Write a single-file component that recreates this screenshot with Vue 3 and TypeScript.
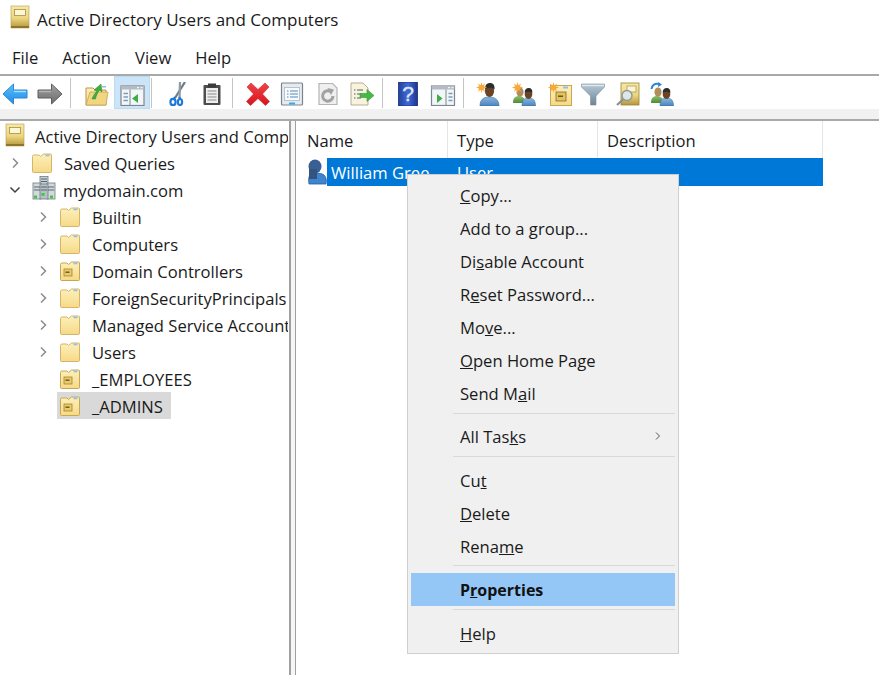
<script setup lang="ts">
import { computed } from 'vue'

type Tool = { kind: 'icon' | 'sep'; c: number; icon?: string; active?: boolean }
const raw: Tool[] = [
  { kind: 'icon', c: 15, icon: 'back' },
  { kind: 'icon', c: 50, icon: 'forward' },
  { kind: 'sep', c: 70 },
  { kind: 'icon', c: 96, icon: 'up' },
  { kind: 'icon', c: 132, icon: 'tree', active: true },
  { kind: 'sep', c: 151 },
  { kind: 'icon', c: 178, icon: 'cut' },
  { kind: 'icon', c: 212, icon: 'paste' },
  { kind: 'sep', c: 232 },
  { kind: 'icon', c: 258, icon: 'del' },
  { kind: 'icon', c: 292, icon: 'props' },
  { kind: 'icon', c: 328, icon: 'refresh' },
  { kind: 'icon', c: 362, icon: 'export' },
  { kind: 'sep', c: 382 },
  { kind: 'icon', c: 408, icon: 'help' },
  { kind: 'icon', c: 443, icon: 'mmc' },
  { kind: 'sep', c: 463 },
  { kind: 'icon', c: 488, icon: 'newuser' },
  { kind: 'icon', c: 524, icon: 'newgroup' },
  { kind: 'icon', c: 560, icon: 'newou' },
  { kind: 'icon', c: 593, icon: 'filter' },
  { kind: 'icon', c: 628, icon: 'find' },
  { kind: 'icon', c: 662, icon: 'addgroup' }
]
const tools = computed(() => {
  let right = 0
  return raw.map((t) => {
    const w = t.kind === 'sep' ? 1 : 36
    const left = t.kind === 'sep' ? t.c : t.c - 18
    const ml = left - right
    right = left + w
    return { ...t, ml }
  })
})

type Node = { label: string; level: number; icon: string; chev?: 'r' | 'd'; sel?: boolean }
const nodes: Node[] = [
  { label: 'Active Directory Users and Computers', level: 0, icon: 'book' },
  { label: 'Saved Queries', level: 1, icon: 'folder', chev: 'r' },
  { label: 'mydomain.com', level: 1, icon: 'domain', chev: 'd' },
  { label: 'Builtin', level: 2, icon: 'folder', chev: 'r' },
  { label: 'Computers', level: 2, icon: 'folder', chev: 'r' },
  { label: 'Domain Controllers', level: 2, icon: 'ou', chev: 'r' },
  { label: 'ForeignSecurityPrincipals', level: 2, icon: 'folder', chev: 'r' },
  { label: 'Managed Service Accounts', level: 2, icon: 'folder', chev: 'r' },
  { label: 'Users', level: 2, icon: 'folder', chev: 'r' },
  { label: '_EMPLOYEES', level: 2, icon: 'ou' },
  { label: '_ADMINS', level: 2, icon: 'ou', sel: true }
]
</script>

<template>
  <div class="window">
    <svg class="defs" width="0" height="0" aria-hidden="true">
      <defs>
        <linearGradient id="gBook" x1="0" y1="0" x2="0" y2="1">
          <stop offset="0" stop-color="#f6e9a8" /><stop offset="0.55" stop-color="#ecd77f" /><stop offset="1" stop-color="#b5953c" />
        </linearGradient>
        <linearGradient id="gFolder" x1="0" y1="0" x2="0" y2="1">
          <stop offset="0" stop-color="#fdf0bb" /><stop offset="1" stop-color="#f6d988" />
        </linearGradient>
        <linearGradient id="gBlue" x1="0" y1="0" x2="0" y2="1">
          <stop offset="0" stop-color="#5cc0fb" /><stop offset="1" stop-color="#1f8be8" />
        </linearGradient>
        <linearGradient id="gGrey" x1="0" y1="0" x2="0" y2="1">
          <stop offset="0" stop-color="#a2a2a2" /><stop offset="1" stop-color="#6c6c6c" />
        </linearGradient>
        <linearGradient id="gHelp" x1="0" y1="0" x2="1" y2="0">
          <stop offset="0" stop-color="#24409c" /><stop offset="0.5" stop-color="#3f6ad6" /><stop offset="1" stop-color="#1c3590" />
        </linearGradient>
        <linearGradient id="gFunnel" x1="0" y1="0" x2="0" y2="1">
          <stop offset="0" stop-color="#b5c9d6" /><stop offset="1" stop-color="#6f8494" />
        </linearGradient>
        <linearGradient id="gBody" x1="0" y1="0" x2="0" y2="1">
          <stop offset="0" stop-color="#8ab8e0" /><stop offset="1" stop-color="#4a84bc" />
        </linearGradient>
        <linearGradient id="gGreenBody" x1="0" y1="0" x2="0" y2="1">
          <stop offset="0" stop-color="#8fbf6a" /><stop offset="1" stop-color="#4f8a3c" />
        </linearGradient>
        <linearGradient id="gRed" x1="0" y1="0" x2="0" y2="1">
          <stop offset="0" stop-color="#f0434a" /><stop offset="1" stop-color="#d8141c" />
        </linearGradient>

        <symbol id="i-book" viewBox="0 0 24 24">
          <rect x="3" y="1" width="18" height="22" fill="url(#gBook)" stroke="#b89a45" stroke-width=".6" />
          <rect x="3" y="21" width="18" height="2" fill="#8f7429" />
          <rect x="6.500" y="4.500" width="11" height="6" fill="#fbf6d8" stroke="#a98f40" stroke-width=".8" />
        </symbol>
        <symbol id="i-folder" viewBox="0 0 22 20">
          <path d="M1.500 3.500a1.500 1.500 0 0 1 1.500-1.500h5l1.500 1.500 3-2.500h7a1 1 0 0 1 1 1v16.500a1 1 0 0 1-1 1h-17a1 1 0 0 1-1-1z" fill="url(#gFolder)" stroke="#d8b566" stroke-width="1" />
          <rect x="14.500" y="1.500" width="4" height="1.800" fill="#8fc0e8" />
        </symbol>
        <symbol id="i-ou" viewBox="0 0 22 20">
          <path d="M1.500 3.500a1.500 1.500 0 0 1 1.500-1.500h5l1.500 1.500 3-2.500h7a1 1 0 0 1 1 1v16.500a1 1 0 0 1-1 1h-17a1 1 0 0 1-1-1z" fill="url(#gFolder)" stroke="#c9a650" stroke-width="1" />
          <rect x="14.500" y="1.500" width="4" height="1.800" fill="#8fc0e8" />
          <rect x="5" y="8" width="8" height="7" fill="#e8cb6c" stroke="#a5842e" stroke-width=".8" />
          <rect x="6.500" y="10.500" width="4" height="1.400" fill="#6b5518" />
        </symbol>
        <symbol id="i-domain" viewBox="0 0 24 24">
          <rect x="8" y="0.500" width="8" height="9" fill="#c8d0d6" stroke="#6f7a82" stroke-width=".8" />
          <rect x="1" y="7" width="8" height="16" fill="#d3dade" stroke="#6f7a82" stroke-width=".8" />
          <rect x="15" y="7" width="8" height="16" fill="#d3dade" stroke="#6f7a82" stroke-width=".8" />
          <rect x="8" y="8" width="8" height="15" fill="#b6c0c7" stroke="#6f7a82" stroke-width=".8" />
          <path d="M2 11h6M2 14h6M16 11h6M16 14h6M9 11h6M9 14h6M9 3h6M9 5.500h6" stroke="#59646c" stroke-width="1" />
          <rect x="2" y="19.500" width="3" height="2.800" fill="#3fc63f" />
          <rect x="9.500" y="17" width="3" height="2.800" fill="#3fc63f" />
          <rect x="18" y="19.500" width="3" height="2.800" fill="#3fc63f" />
        </symbol>

        <symbol id="i-back" viewBox="0 0 26 24">
          <path d="M1 12 11.500 2v6H25v8H11.500v6z" fill="url(#gBlue)" stroke="#2f86d6" stroke-width="1" stroke-linejoin="round" />
          <path d="M12 9.500h12" stroke="#a6e0ff" stroke-width="1.400" />
        </symbol>
        <symbol id="i-forward" viewBox="0 0 26 24">
          <path d="M25 12 14.500 2v6H1v8h13.500v6z" fill="url(#gGrey)" stroke="#5f5f5f" stroke-width="1" stroke-linejoin="round" />
          <path d="M2 9.500h12" stroke="#b5b5b5" stroke-width="1.400" />
        </symbol>
        <symbol id="i-up" viewBox="0 0 24 24">
          <path d="M2 6h7l2 2h11v15H2z" fill="url(#gFolder)" stroke="#b9954a" stroke-width="1" />
          <path d="M2 23 6 10h18l-2 13z" fill="#f2d583" stroke="#c6a354" stroke-width=".8" />
          <path d="M8 17c1-3 3-6 5-8l-3-1 7-6 1 8-2.500-2c-1.500 2-3.500 6-4 9z" fill="#3fae3f" stroke="#2b8a2b" stroke-width=".5" />
          <rect x="18" y="4" width="4" height="1.500" fill="#8fc0e8" />
        </symbol>
        <symbol id="i-tree" viewBox="0 0 26 24">
          <rect x="2" y="4" width="23" height="19.500" fill="#f3f6f8" stroke="#7d868e" stroke-width="1.200" />
          <rect x="2" y="4" width="23" height="3.500" fill="#b4bbc2" />
          <path d="M18 5.700h2M21.500 5.700h2" stroke="#f4f4f4" stroke-width="1.200" />
          <path d="M11 7.500v16" stroke="#7d868e" stroke-width="1" />
          <path d="M4.500 11.500h4.500M4.500 15h4.500M4.500 18.500h4.500" stroke="#7b9dbd" stroke-width="1.500" />
          <path d="M19 12v9l-6-4.500z" fill="#3dae46" />
        </symbol>
        <symbol id="i-cut" viewBox="0 0 26 24">
          <path d="M20 0 10 16" stroke="#6c7a86" stroke-width="2.200" />
          <path d="M15 0 14.500 16" stroke="#8e9aa4" stroke-width="2.200" />
          <path d="M10 15 8.500 18M14.500 15 15 18" stroke="#1f79d8" stroke-width="2.200" />
          <ellipse cx="8" cy="20" rx="2.600" ry="3.200" fill="none" stroke="#1f79d8" stroke-width="2.200" />
          <ellipse cx="15" cy="20" rx="2.100" ry="3" fill="none" stroke="#1f79d8" stroke-width="2.200" />
        </symbol>
        <symbol id="i-paste" viewBox="0 0 24 24">
          <rect x="3.500" y="3" width="17" height="20" rx="1" fill="#4d4d4d" />
          <rect x="6" y="6" width="12" height="15" fill="#eeeeee" />
          <rect x="8" y="1.500" width="8" height="4" fill="#3a3a3a" />
          <path d="M7.500 9h9M7.500 12h9M7.500 15h9M7.500 18h9" stroke="#8b8b8b" stroke-width="1" />
        </symbol>
        <symbol id="i-del" viewBox="0 0 24 24">
          <path d="M1 5 5 1 12 7.500 19 1 23 5 16.500 12 23.500 19.500 19.500 23.500 12 16.500 4.500 23.500.5 19.500 7.500 12z" fill="url(#gRed)" stroke="#c2161d" stroke-width=".5" />
        </symbol>
        <symbol id="i-props" viewBox="0 0 24 24">
          <rect x="1.500" y="1" width="21" height="22" rx="1" fill="#e6ebf0" stroke="#7c858e" stroke-width="1.200" />
          <rect x="4.500" y="5.500" width="15" height="13" fill="#f8fafb" stroke="#aeb7bf" stroke-width=".8" />
          <path d="M7 9h1.500M10 9h8M7 12h1.500M10 12h8M7 15h1.500M10 15h8" stroke="#4d87c2" stroke-width="1.200" />
          <rect x="9" y="20.500" width="6" height="2" fill="#3ea6ea" />
        </symbol>
        <symbol id="i-refresh" viewBox="0 0 24 24">
          <path d="M3 1.500h13.500l4.500 4.500v16.500H3z" fill="#efefef" stroke="#b4b4b4" stroke-width="1.200" />
          <path d="M17 14a5.200 5.200 0 1 1-2.200-4.300" fill="none" stroke="#a2a2a2" stroke-width="3" />
          <path d="M11.500 6 18 7.500 15 13z" fill="#a2a2a2" />
        </symbol>
        <symbol id="i-export" viewBox="0 0 26 24">
          <path d="M2 1h12l5 5v17H2z" fill="#f7f3dc" stroke="#b5ae93" stroke-width="1" />
          <path d="M5 8h1.500M8 8h6M5 12h1.500M8 12h4M5 16h1.500M8 16h4" stroke="#55606a" stroke-width="1.100" />
          <path d="M11 11.500h7v-4l7 6-7 6v-4h-7z" fill="#46b84a" stroke="#36993a" stroke-width=".6" />
        </symbol>
        <symbol id="i-help" viewBox="0 0 24 24">
          <rect x="2.500" y="0" width="19" height="24" fill="url(#gHelp)" stroke="#17307f" stroke-width=".8" />
          <text x="12" y="19" text-anchor="middle" font-family="'Liberation Sans', sans-serif" font-size="21" fill="#dfe5f7" stroke="#dfe5f7" stroke-width=".4">?</text>
        </symbol>
        <symbol id="i-mmc" viewBox="0 0 26 24">
          <rect x="1.500" y="4" width="23" height="19.500" fill="#f3f6f8" stroke="#7d868e" stroke-width="1.200" />
          <rect x="1.500" y="4" width="23" height="3.500" fill="#b4bbc2" />
          <path d="M18 5.700h2M21.500 5.700h2" stroke="#f4f4f4" stroke-width="1.200" />
          <path d="M16 7.500v16" stroke="#7d868e" stroke-width="1" />
          <path d="M18.500 11.500h4M18.500 15h4M18.500 18.500h4" stroke="#7b9dbd" stroke-width="1.500" />
          <path d="M7 12v9l5.500-4.500z" fill="#3dae46" />
        </symbol>
        <symbol id="i-star" viewBox="0 0 12 12">
          <path d="M6 0 7 3.500 10 1.500 8.500 4.700 12 6 8.500 7.300 10 10.500 7 8.500 6 12 5 8.500 2 10.500 3.500 7.300 0 6 3.500 4.700 2 1.500 5 3.500z" fill="#f9a83a" />
        </symbol>
        <symbol id="i-newuser" viewBox="0 0 24 24">
          <path d="M4 24c0-6 3-9 9-9s10 3 10 9z" fill="url(#gBody)" stroke="#35699b" stroke-width=".6" />
          <ellipse cx="13.500" cy="9" rx="4.600" ry="6" fill="#6a4425" />
          <path d="M9 7c0-4 2-6 5-6s5 2 4.500 6.500c-2-2-6-2.500-9.500-.5z" fill="#2d2d2d" />
          <use href="#i-star" x="0" y="0" width="11" height="11" />
        </symbol>
        <symbol id="i-newgroup" viewBox="0 0 24 24">
          <path d="M1 21c0-5 2-7 6-7s6 2 6 7z" fill="url(#gGreenBody)" />
          <ellipse cx="8" cy="10" rx="3.600" ry="4.600" fill="#b08d5d" />
          <path d="M10 24c0-6 2-8 6.500-8s7 2 7 8z" fill="url(#gBody)" stroke="#35699b" stroke-width=".5" />
          <ellipse cx="16.500" cy="12" rx="3.800" ry="5" fill="#6a4425" />
          <path d="M12.700 10.500c0-3 1.500-4.500 4-4.500s4 1.500 3.600 4.800c-2-1.300-5-1.500-7.600-.3z" fill="#2d2d2d" />
          <use href="#i-star" x="0" y="0" width="11" height="11" />
        </symbol>
        <symbol id="i-newou" viewBox="0 0 24 24">
          <rect x="2.500" y="3.500" width="21" height="20" fill="url(#gFolder)" stroke="#c9a650" stroke-width="1" />
          <rect x="15" y="4.500" width="5" height="2" fill="#8fc0e8" />
          <rect x="8" y="10" width="10" height="9" fill="#e2c261" stroke="#8a6d22" stroke-width=".8" />
          <rect x="10" y="13.500" width="5" height="1.500" fill="#6b5518" />
          <use href="#i-star" x="0" y="0" width="11" height="11" />
        </symbol>
        <symbol id="i-filter" viewBox="0 0 24 24">
          <path d="M.5 2h23v3L15 14v9H9.500V14L.5 5z" fill="url(#gFunnel)" stroke="#7a8e9c" stroke-width=".6" />
          <path d="M1 3.500h22" stroke="#e2eaef" stroke-width="1.400" />
        </symbol>
        <symbol id="i-find" viewBox="0 0 24 24">
          <rect x="5" y="1" width="18" height="22" fill="url(#gBook)" stroke="#9d8232" stroke-width=".8" />
          <rect x="11" y="4" width="9" height="6" fill="#fbf6d8" stroke="#a98f40" stroke-width=".7" />
          <circle cx="11" cy="13.500" r="5" fill="#dbeaf2" fill-opacity=".9" stroke="#8e989e" stroke-width="1.400" />
          <path d="M7 17.500 1 23" stroke="#8a8f93" stroke-width="2.200" />
        </symbol>
        <symbol id="i-addgroup" viewBox="0 0 24 24">
          <path d="M1 21c0-5 2-7 6-7s6 2 6 7z" fill="url(#gGreenBody)" />
          <ellipse cx="8" cy="10" rx="3.600" ry="4.600" fill="#b08d5d" />
          <path d="M10 24c0-6 2-8 6.500-8s7 2 7 8z" fill="url(#gBody)" stroke="#35699b" stroke-width=".5" />
          <ellipse cx="16.500" cy="12" rx="3.800" ry="5" fill="#6a4425" />
          <path d="M12.700 10.500c0-3 1.500-4.500 4-4.500s4 1.500 3.600 4.800c-2-1.300-5-1.500-7.600-.3z" fill="#2d2d2d" />
          <path d="M1.500 7C2 3 5 1 9 2" fill="none" stroke="#2a86d8" stroke-width="2" />
          <path d="M8 0l4 2.500L8 5z" fill="#2a86d8" />
        </symbol>
        <symbol id="i-user" viewBox="0 0 20 26">
          <path d="M2 25c-1-6 0-9 3-10 4-1 10-1 12 1s3 5 2 9z" fill="#3f84cf" stroke="#2a5d99" stroke-width=".8" />
          <ellipse cx="8" cy="7.500" rx="6.500" ry="7" fill="#3a5f92" />
          <path d="M2 10h8v10H2z" fill="#33547f" />
        </symbol>
      </defs>
    </svg>

    <header class="titlebar">
      <svg class="title-icon" width="24" height="24"><use href="#i-book" /></svg>
      <span class="title">Active Directory Users and Computers</span>
    </header>

    <nav class="menubar">
      <span>File</span><span>Action</span><span>View</span><span>Help</span>
    </nav>

    <div class="toolbar">
      <template v-for="t in tools" :key="t.c">
        <div v-if="t.kind === 'sep'" class="tsep" :style="{ marginLeft: t.ml + 'px' }"></div>
        <div v-else class="tbtn" :class="{ active: t.active }" :style="{ marginLeft: t.ml + 'px' }">
          <svg width="26" height="24"><use :href="'#i-' + t.icon" /></svg>
        </div>
      </template>
    </div>
    <div class="band"></div>

    <main class="panes">
      <section class="tree">
        <div v-for="n in nodes" :key="n.label" class="row" :class="'lv' + n.level">
          <span class="chev">
            <svg v-if="n.chev === 'r'" width="10" height="12" viewBox="0 0 10 12"><path d="M3 1.500 7.500 6 3 10.500" fill="none" stroke="#8c8c8c" stroke-width="1.500" /></svg>
            <svg v-if="n.chev === 'd'" width="12" height="10" viewBox="0 0 12 10"><path d="M1.500 2.500 6 7l4.500-4.500" fill="none" stroke="#404040" stroke-width="1.500" /></svg>
          </span>
          <span class="node" :class="{ sel: n.sel }">
            <svg class="node-icon" :class="'ni-' + n.icon"><use :href="'#i-' + n.icon" /></svg>
            <span class="label">{{ n.label }}</span>
          </span>
        </div>
      </section>

      <div class="splitter"></div>

      <section class="list">
        <div class="lhead">
          <div class="col c1">Name</div>
          <div class="col c2">Type</div>
          <div class="col c3">Description</div>
        </div>
        <div class="lrow">
          <svg class="user-icon" width="20" height="26"><use href="#i-user" /></svg>
          <div class="selrow">
            <span class="cname">William Gree…</span>
            <span class="ctype">User</span>
          </div>
        </div>
      </section>
    </main>

    <div class="ctx">
      <div class="it"><span><u>C</u>opy...</span></div>
      <div class="it"><span>Add to a <u>g</u>roup...</span></div>
      <div class="it"><span>Di<u>s</u>able Account</span></div>
      <div class="it"><span>R<u>e</u>set Password...</span></div>
      <div class="it"><span>Mo<u>v</u>e...</span></div>
      <div class="it"><span><u>O</u>pen Home Page</span></div>
      <div class="it"><span>Send M<u>a</u>il</span></div>
      <div class="sep s1"></div>
      <div class="it"><span>All Tas<u>k</u>s</span><svg class="sub" width="8" height="10" viewBox="0 0 8 10"><path d="M2 1.500 5.500 5 2 8.500" fill="none" stroke="#555" stroke-width="1" /></svg></div>
      <div class="sep"></div>
      <div class="it"><span>Cu<u>t</u></span></div>
      <div class="it"><span><u>D</u>elete</span></div>
      <div class="it"><span>Rena<u>m</u>e</span></div>
      <div class="sep s3"></div>
      <div class="it hot"><span><b>P<u>r</u>operties</b></span></div>
      <div class="sep"></div>
      <div class="it"><span><u>H</u>elp</span></div>
    </div>
  </div>
</template>

<style>
html, body { background: #fff; overflow: hidden; }
</style>

<style scoped>
.window {
  position: relative;
  width: 879px;
  height: 675px;
  overflow: hidden;
  background: #fff;
  color: #1a1a1a;
  font-family: "Open Sans", "Noto Sans", sans-serif;
  font-size: 16.6px;
  display: flex;
  flex-direction: column;
}
.defs { position: absolute; }
.titlebar {
  height: 40px;
  display: flex;
  align-items: center;
  padding-left: 8px;
  padding-bottom: 2px;
  box-sizing: border-box;
  flex: none;
}
.title-icon { margin-right: 5px; margin-top: -4px; flex: none; }
.title { font-size: 17px; }
.menubar {
  height: 36px;
  display: flex;
  align-items: center;
  gap: 24px;
  padding: 1px 0 0 12px;
  box-sizing: border-box;
  border-bottom: 2px solid #a9a9a9;
  flex: none;
}
.toolbar {
  height: 33px;
  display: flex;
  align-items: center;
  flex: none;
  background: #fff;
}
.tbtn {
  width: 36px;
  height: 33px;
  flex: none;
  display: flex;
  align-items: center;
  justify-content: center;
  padding-top: 3px;
  box-sizing: border-box;
}
.tbtn.active { background: #cce4f7; box-shadow: inset 0 0 0 1px #b9dcf5; }
.tsep { width: 1px; height: 30px; background: #c4c4c4; flex: none; }
.band { height: 10px; background: #f1f1f1; flex: none; }
.panes {
  flex: 1;
  display: flex;
  min-height: 0;
  border-top: 2px solid #a9a9a9;
}
.tree {
  width: 289px;
  flex: none;
  overflow: hidden;
  padding: 1px 1px 0 0;
  box-sizing: border-box;
}
.row {
  height: 27px;
  display: flex;
  align-items: center;
  white-space: nowrap;
  overflow: hidden;
}
.chev { width: 14px; display: flex; justify-content: center; flex: none; }
.lv0 { padding-left: 3px; }
.lv0 .chev { display: none; }
.lv1 { padding-left: 8px; }
.lv2 { padding-left: 36px; }
.node {
  display: flex;
  align-items: center;
  height: 27px;
  padding-left: 10px;
  padding-right: 6px;
  margin-left: -1px;
}
.lv0 .node { padding-left: 0; margin-left: 0; }
.label { padding-top: 2px; }
.node-icon { flex: none; width: 22px; height: 22px; margin-right: 11px; }
.ni-book { width: 24px; height: 24px; margin-right: 8px; margin-top: -2px; }
.ni-domain { width: 24px; height: 24px; margin: -3px 7px 0 1px; }
.node.sel { background: #d9d9d9; padding-left: 2px; padding-right: 8px; margin-left: 7px; }
.splitter {
  width: 7px;
  flex: none;
  background: #f6f6f6;
  box-sizing: border-box;
  border-left: 2px solid #a0a0a0;
  border-right: 1px solid #a0a0a0;
}
.list { flex: 1; min-width: 0; position: relative; }
.lhead {
  height: 37px;
  display: flex;
  align-items: center;
}
.col {
  height: 100%;
  width: 150px;
  box-sizing: border-box;
  padding: 2px 0 0 9px;
  display: flex;
  align-items: center;
  border-right: 1px solid #e5e5e5;
  flex: none;
}
.col.c1 { width: 152px; padding-left: 11px; }
.col.c3 { width: 225px; }
.lrow { display: flex; align-items: center; height: 28px; padding-left: 11px; }
.user-icon { flex: none; }
.selrow {
  width: 496px;
  height: 28px;
  background: #0078d7;
  color: #fff;
  display: flex;
  align-items: center;
  box-sizing: border-box;
  padding: 1px 0 0 4px;
}
.cname { width: 126px; flex: none; white-space: nowrap; overflow: hidden; }
.ctx {
  position: absolute;
  left: 407px;
  top: 174px;
  width: 272px;
  height: 480px;
  box-sizing: border-box;
  background: #f0f0f0;
  border: 1px solid #cfcfcf;
  padding: 4px 3px 0;
  color: #1a1a1a;
}
.it {
  height: 33px;
  display: flex;
  align-items: center;
  justify-content: space-between;
  padding-left: 49px;
  padding-right: 13px;
  width: 264px;
  box-sizing: border-box;
}
.sub { flex: none; margin-top: -2px; }
.sep {
  height: 1px;
  width: 222px;
  background: #d9d9d9;
  margin: 3px 0 7px 42px;
}
.sep.s1 { margin-bottom: 6px; }
.sep.s3 { margin-top: 2px; }
.hot { background: #94c6f6; }
.hot b { font-weight: 700; font-size: 16px; color: #111; }
</style>
